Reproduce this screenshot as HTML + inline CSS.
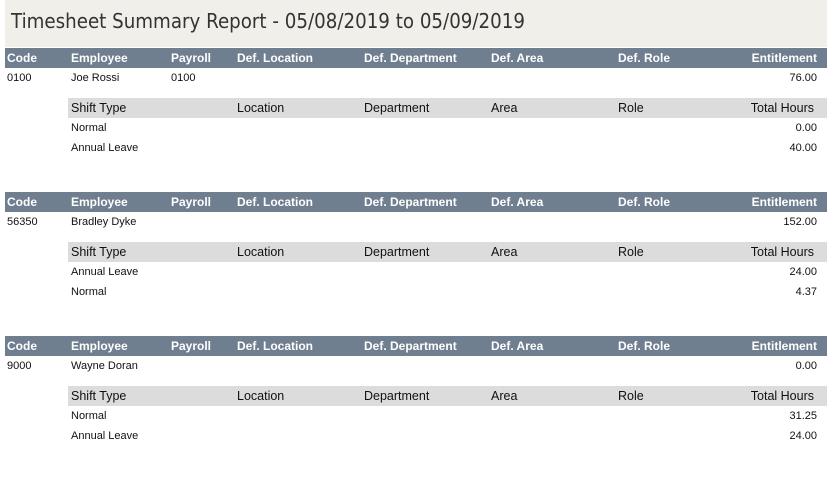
<!DOCTYPE html>
<html><head><style>
body{margin:0;width:835px;height:465px;background:#fff;font-family:"Liberation Sans",Arial,sans-serif;position:relative;overflow:hidden}
.title{position:absolute;left:5px;top:0;width:822px;height:47px;background:#f1efea;}
.title span{position:absolute;left:6px;top:9px;font-family:"DejaVu Sans",Verdana,sans-serif;font-size:20.5px;color:#333;transform:scaleX(0.89);transform-origin:0 0;white-space:nowrap}
.sec{position:absolute;left:0;width:835px;height:144px}
.hd{position:absolute;left:5px;top:0;width:822px;height:20px;background:#6f7f8f;color:#fff;font-weight:bold;font-size:12px}
.sub{position:absolute;left:68px;top:50px;width:759px;height:20px;background:#dcdcdc;color:#111;font-size:12.5px}
.t{position:absolute;white-space:nowrap;line-height:20px}
.d{font-size:11px;color:#111}
</style></head><body>
<div class="title"><span>Timesheet Summary Report - 05/08/2019 to 05/09/2019</span></div>

<div class="sec" style="top:48px">
<div class="hd"><span class="t" style="left:2px">Code</span><span class="t" style="left:66px">Employee</span><span class="t" style="left:166px">Payroll</span><span class="t" style="left:232px">Def. Location</span><span class="t" style="left:359px">Def. Department</span><span class="t" style="left:486px">Def. Area</span><span class="t" style="left:613px">Def. Role</span><span class="t" style="right:10px">Entitlement</span></div>
<span class="t d" style="left:7px;top:20px">0100</span><span class="t d" style="left:71px;top:20px">Joe Rossi</span><span class="t d" style="left:171px;top:20px">0100</span><span class="t d" style="right:18px;top:20px">76.00</span>
<div class="sub"><span class="t" style="left:3px">Shift Type</span><span class="t" style="left:169px">Location</span><span class="t" style="left:296px">Department</span><span class="t" style="left:423px">Area</span><span class="t" style="left:550px">Role</span><span class="t" style="right:13px">Total Hours</span></div>
<span class="t d" style="left:71px;top:70px">Normal</span><span class="t d" style="right:18px;top:70px">0.00</span>
<span class="t d" style="left:71px;top:90px">Annual Leave</span><span class="t d" style="right:18px;top:90px">40.00</span>
</div>

<div class="sec" style="top:192px">
<div class="hd"><span class="t" style="left:2px">Code</span><span class="t" style="left:66px">Employee</span><span class="t" style="left:166px">Payroll</span><span class="t" style="left:232px">Def. Location</span><span class="t" style="left:359px">Def. Department</span><span class="t" style="left:486px">Def. Area</span><span class="t" style="left:613px">Def. Role</span><span class="t" style="right:10px">Entitlement</span></div>
<span class="t d" style="left:7px;top:20px">56350</span><span class="t d" style="left:71px;top:20px">Bradley Dyke</span><span class="t d" style="right:18px;top:20px">152.00</span>
<div class="sub"><span class="t" style="left:3px">Shift Type</span><span class="t" style="left:169px">Location</span><span class="t" style="left:296px">Department</span><span class="t" style="left:423px">Area</span><span class="t" style="left:550px">Role</span><span class="t" style="right:13px">Total Hours</span></div>
<span class="t d" style="left:71px;top:70px">Annual Leave</span><span class="t d" style="right:18px;top:70px">24.00</span>
<span class="t d" style="left:71px;top:90px">Normal</span><span class="t d" style="right:18px;top:90px">4.37</span>
</div>

<div class="sec" style="top:336px">
<div class="hd"><span class="t" style="left:2px">Code</span><span class="t" style="left:66px">Employee</span><span class="t" style="left:166px">Payroll</span><span class="t" style="left:232px">Def. Location</span><span class="t" style="left:359px">Def. Department</span><span class="t" style="left:486px">Def. Area</span><span class="t" style="left:613px">Def. Role</span><span class="t" style="right:10px">Entitlement</span></div>
<span class="t d" style="left:7px;top:20px">9000</span><span class="t d" style="left:71px;top:20px">Wayne Doran</span><span class="t d" style="right:18px;top:20px">0.00</span>
<div class="sub"><span class="t" style="left:3px">Shift Type</span><span class="t" style="left:169px">Location</span><span class="t" style="left:296px">Department</span><span class="t" style="left:423px">Area</span><span class="t" style="left:550px">Role</span><span class="t" style="right:13px">Total Hours</span></div>
<span class="t d" style="left:71px;top:70px">Normal</span><span class="t d" style="right:18px;top:70px">31.25</span>
<span class="t d" style="left:71px;top:90px">Annual Leave</span><span class="t d" style="right:18px;top:90px">24.00</span>
</div>
</body></html>
